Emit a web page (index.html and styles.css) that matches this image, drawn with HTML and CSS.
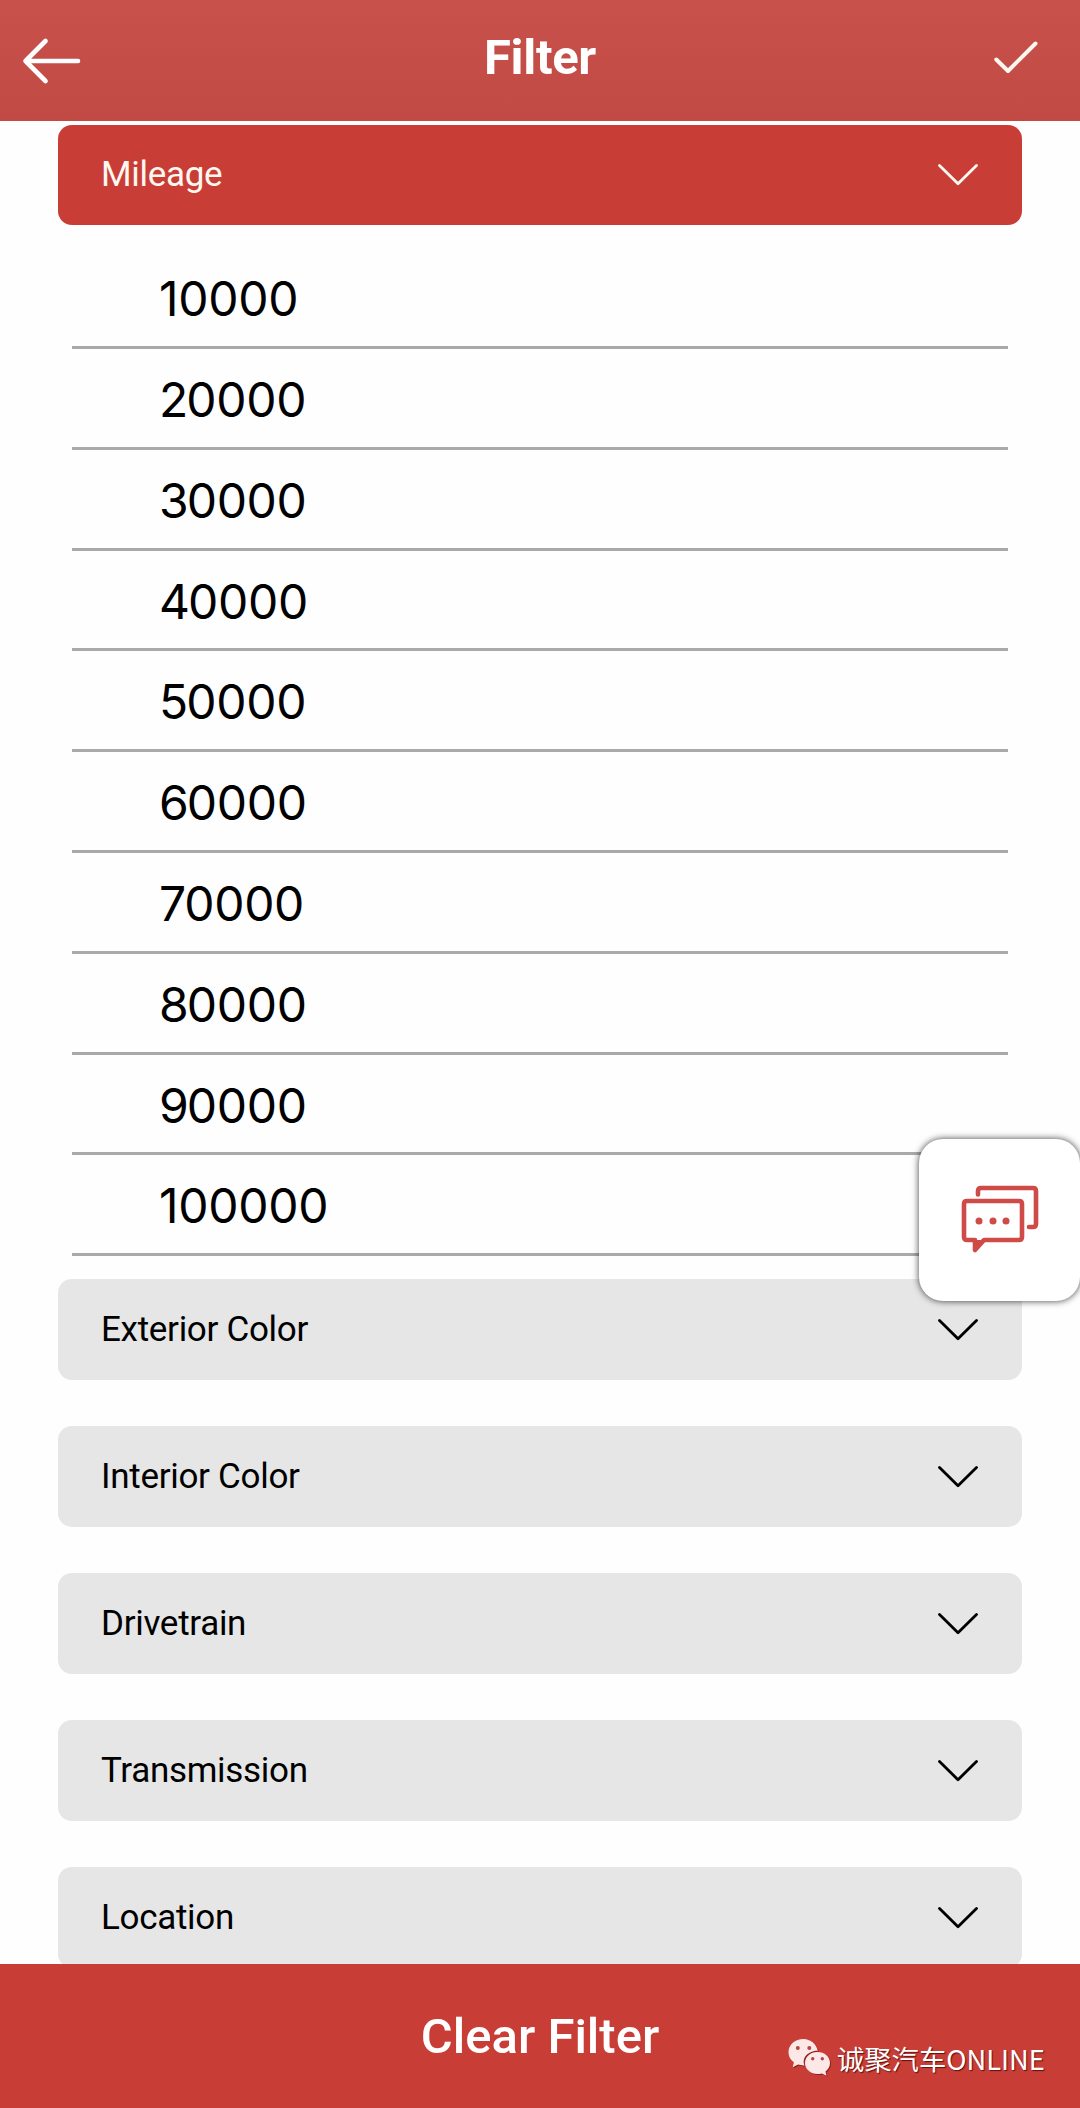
FILE: index.html
```html
<!DOCTYPE html>
<html lang="en">
<head>
<meta charset="utf-8">
<title>Filter</title>
<link rel="stylesheet" href="styles.css">
</head>
<body>
<svg class="defs" aria-hidden="true"><symbol id="chevron" viewBox="0 0 40 22"><path d="M1.5 1.5 20 19.8 38.500 1.500"/></symbol></svg>
<div class="screen">
  <header class="header">
    <svg class="back" viewBox="0 0 58 44"><path d="M22.500 2 2.500 22 22.500 42M3 22H55"/></svg>
    <h1 class="title">Filter</h1>
    <svg class="check" viewBox="0 0 44 32"><path d="M2.300 18.500 14 30 41.500 2.500"/></svg>
  </header>
  <main class="content">
    <div class="section active"><span>Mileage</span><svg class="chevron"><use href="#chevron"/></svg></div>
    <ul class="options">
      <li class="narrow">10000</li>
      <li>20000</li>
      <li>30000</li>
      <li>40000</li>
      <li>50000</li>
      <li>60000</li>
      <li>70000</li>
      <li>80000</li>
      <li>90000</li>
      <li class="narrow">100000</li>
    </ul>
    <div class="sections">
      <div class="section"><span>Exterior Color</span><svg class="chevron"><use href="#chevron"/></svg></div>
      <div class="section"><span>Interior Color</span><svg class="chevron"><use href="#chevron"/></svg></div>
      <div class="section"><span>Drivetrain</span><svg class="chevron"><use href="#chevron"/></svg></div>
      <div class="section"><span>Transmission</span><svg class="chevron"><use href="#chevron"/></svg></div>
      <div class="section"><span>Location</span><svg class="chevron"><use href="#chevron"/></svg></div>
    </div>
  </main>
  <footer class="footer">Clear Filter</footer>
  <div class="chat">
    <svg class="chat-icon" viewBox="0 0 76 68">
      <path d="M16 9.500V6Q16 3 19 3H71Q74 3 74 6V39Q74 42 71 42H67"/>
      <path d="M5 16H57Q60 16 60 19V52Q60 55 57 55H22L13 65V55H5Q2 55 2 52V19Q2 16 5 16Z"/>
      <path class="fill" d="M12 55H22L12 67Z"/>
      <circle class="fill" cx="17" cy="36" r="3.500"/><circle class="fill" cx="31" cy="36" r="3.500"/><circle class="fill" cx="44" cy="36" r="3.500"/>
    </svg>
  </div>
  <div class="watermark">
    <svg class="wechat" viewBox="0 0 43 38">
      <path d="M15.500 1C7 1 .5 6.800.500 14.300c0 4.100 2 7.700 5.400 10.100L4.700 29.300l5.400-2.700c1.700.5 3.600.8 5.400.8h1C13.500 20 20 12.800 29.800 12.800 28.300 6 22.500 1 15.500 1Z"/>
      <path d="M29.500 14C22.500 14 17 18.800 17 25s5.500 11 12.500 11c1.600 0 3.100-.2 4.400-.6l4.600 2.300-1-4.200c2.800-2.100 4.500-5.100 4.500-8.500 0-6.200-5.500-11-12.500-11Z"/>
      <g class="eyes"><circle cx="9.800" cy="10" r="2"/><circle cx="21.300" cy="10" r="2"/><circle cx="24.700" cy="20.800" r="1.700"/><circle cx="34.300" cy="20.800" r="1.700"/></g>
    </svg>
    <span>诚聚汽车ONLINE</span>
  </div>
</div>
</body>
</html>
```
FILE: styles.css
```css
* { box-sizing: border-box; }
body { margin: 0; background: #fff; font-family: Roboto, "Liberation Sans", sans-serif; color: #000; }
svg { fill: none; stroke: currentColor; stroke-linecap: round; stroke-linejoin: round; display: block; flex: none; overflow: visible; }
.defs { position: absolute; width: 0; height: 0; }
.screen { position: relative; display: flex; flex-direction: column; width: 1080px; height: 2108px; overflow: hidden; background: #fefefe; }
.header { display: grid; grid-template-columns: 1fr auto 1fr; align-items: center; height: 120.5px; padding: 0 42px 0 23px; flex: none; color: #fff; background: linear-gradient(#c9514c, #c14a44); }
.back { width: 58px; height: 44px; stroke-width: 4.6; margin-top: 1px; }
.title { margin: -4px 0 0 19px; font-size: 49px; font-weight: 700; line-height: 60px; letter-spacing: -.3px; }
.check { width: 44px; height: 32px; stroke-width: 4; justify-self: end; margin-top: -7px; color: #fff8f0; }
.content { flex: 1; min-height: 0; overflow: hidden; padding: 4px 58px 0; }
.section { display: flex; align-items: center; justify-content: space-between; height: 100.5px; padding: 0 44px 0 43px; border-radius: 14px; background: #e6e6e6; font-size: 35px; line-height: 42px; letter-spacing: -.3px; }
.section span { margin-top: 1px; }
.section.active { background: #c83d36; color: #fff8f0; }
.chevron { width: 40px; height: 22px; stroke-width: 2.8; }
.options { list-style: none; margin: 23.300px 14px 23px; padding: 0; font-family: Inter, "Liberation Sans", sans-serif; font-size: 48px; letter-spacing: -.3px; }
.options li { height: 100.800px; padding: 4px 0 0 87px; line-height: 94px; border-bottom: 3px solid #a9a9a9; }
.options li:not(.narrow)::first-letter { letter-spacing: -2px; }
.sections { display: flex; flex-direction: column; gap: 46.500px; }
.footer { display: flex; align-items: center; justify-content: center; height: 144px; flex: none; background: #c83d36; color: #fff; font-size: 49px; font-weight: 500; }
.chat { position: absolute; right: 0; top: 1139px; display: flex; align-items: center; justify-content: center; width: 161px; height: 162px; border-radius: 24px; background: #fff; box-shadow: 0 0 7px rgba(0, 0, 0, .75); color: #cf4b47; padding-bottom: 2px; }
.chat-icon { width: 76px; height: 68px; stroke-width: 4.6; filter: blur(.7px); }
.fill { fill: currentColor; stroke: none; }
.watermark { position: absolute; left: 788px; top: 2038px; display: flex; align-items: center; gap: 6px; color: #fff; font: 27.300px/40px "Noto Sans CJK SC", sans-serif; text-shadow: 1px 1px 1px rgba(60, 0, 0, .75); white-space: nowrap; }
.wechat { width: 43px; height: 38px; margin-top: -3px; fill: #fce8e7; stroke: none; filter: drop-shadow(1px 1px 0 rgba(90, 0, 0, .5)); }
.eyes { fill: #b94540; }
```
